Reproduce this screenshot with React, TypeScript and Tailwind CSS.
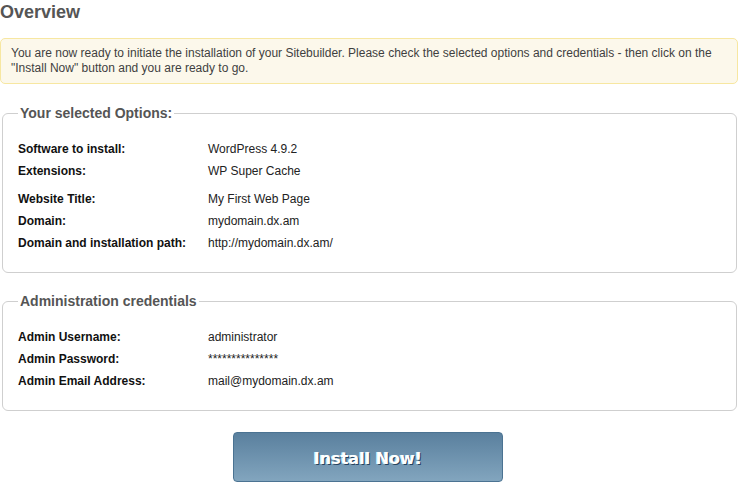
import React from "react";

const options = [
	[
		["Software to install:", "WordPress 4.9.2"],
		["Extensions:", "WP Super Cache"],
	],
	[
		["Website Title:", "My First Web Page"],
		["Domain:", "mydomain.dx.am"],
		["Domain and installation path:", "http://mydomain.dx.am/"],
	],
];

const credentials = [
	["Admin Username:", "administrator"],
	["Admin Password:", "***************"],
	["Admin Email Address:", "mail@mydomain.dx.am"],
];

function Row({ label, value }: { label: string; value: string }) {
	return (
		<div className="flex h-[22px] items-center text-[12px]">
			<span className="w-[190px] shrink-0 font-bold text-[#111]">{label}</span>
			<span className="text-[#222]">{value}</span>
		</div>
	);
}

function Box({ title, children }: { title: string; children: React.ReactNode }) {
	return (
		<fieldset className="ml-[2px] mr-[3px] rounded-[6px] border border-[#cfcfcf] px-[15px] pt-[16px] pb-[18px]">
			<legend className="px-[2px] text-[14px] leading-[17px] font-bold text-[#555]">
				{title}
			</legend>
			{children}
		</fieldset>
	);
}

export default function App() {
	return (
		<div className="w-[740px] bg-white font-['Liberation_Sans',Arial,sans-serif] text-[#333]">
			<h1 className="text-[18px] leading-[24px] font-bold text-[#555]">Overview</h1>

			<div className="mt-[14px] mr-[2px] rounded-[5px] border border-[#f7e7a1] bg-[#fcf8eb] px-[10px] py-[7px] text-[12px] leading-[15px] text-[#3f3f3f]">
				You are now ready to initiate the installation of your Sitebuilder. Please check the
				selected options and credentials - then click on the "Install Now" button and you are
				ready to go.
			</div>

			<div className="mt-[21px]">
				<Box title="Your selected Options:">
					<div className="flex flex-col gap-[6px]">
						{options.map((group, i) => (
							<div key={i}>
								{group.map(([label, value]) => (
									<Row key={label} label={label} value={value} />
								))}
							</div>
						))}
					</div>
				</Box>
			</div>

			<div className="mt-[20px]">
				<Box title="Administration credentials">
					{credentials.map(([label, value]) => (
						<Row key={label} label={label} value={value} />
					))}
				</Box>
			</div>

			<div className="mt-[21px] flex justify-center pr-[4px]">
				<button className="h-[50px] w-[270px] rounded-[4px] border border-[#4b7392] bg-gradient-to-b from-[#5a809e] to-[#82a5be] pt-[4px] font-['DejaVu_Sans',Verdana,sans-serif] text-[16px] font-bold text-white [text-shadow:1px_1px_0_#26445f,-1px_0_0_#c8f0ff]">
					Install Now!
				</button>
			</div>
		</div>
	);
}
